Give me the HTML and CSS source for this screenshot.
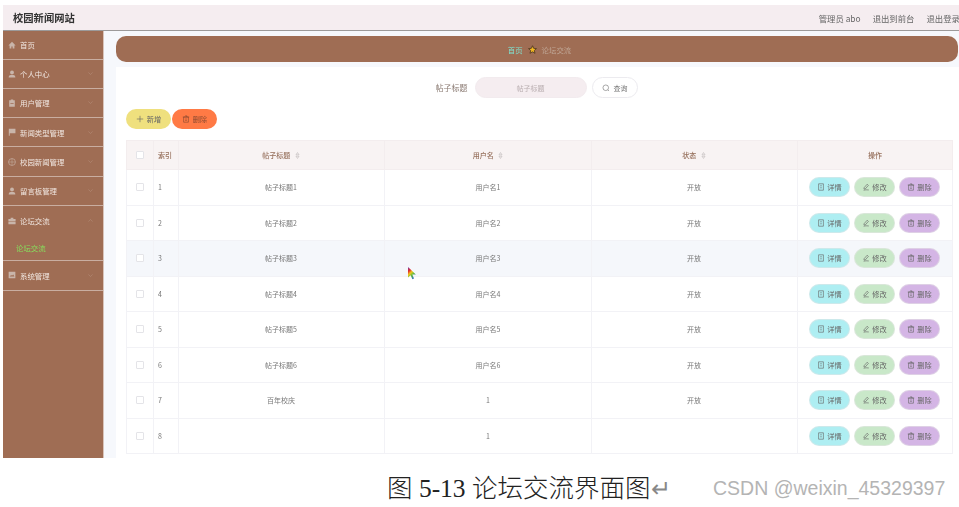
FILE: index.html
```html
<!DOCTYPE html>
<html lang="zh">
<head>
	<meta charset="UTF-8">
	<meta name="viewport" content="width=device-width, initial-scale=1.0">
	<title>校园新闻网站</title>
	<link rel="stylesheet" href="styles.css">
</head>
<body>
	<svg class="defs" width="0" height="0">
		<symbol id="i-doc" viewBox="0 0 10 10"><path d="M2 1h6v8H2zM4 3.500h2M4 6h2" fill="none" stroke="currentColor" stroke-width=".8"/></symbol>
		<symbol id="i-edit" viewBox="0 0 10 10"><path d="M6.500 1.500 8 3 4 7.500H2.500V6zM2 9c2-.6 4-.6 6.500-.3" fill="none" stroke="currentColor" stroke-width=".8"/></symbol>
		<symbol id="i-del" viewBox="0 0 10 10"><path d="M2 2.500h6V9H2zM1 2.500h8M4 1h2v1.500M4 5h2M4 6.800h2" fill="none" stroke="currentColor" stroke-width=".8"/></symbol>
		<symbol id="i-down" viewBox="0 0 10 10"><path d="M2 3.500 5 6.500 8 3.500" fill="none" stroke="currentColor" stroke-width=".8"/></symbol>
		<symbol id="i-up" viewBox="0 0 10 10"><path d="M2 6.500 5 3.500 8 6.500" fill="none" stroke="currentColor" stroke-width=".8"/></symbol>
		<symbol id="i-sort" viewBox="0 0 6 10"><path d="M3 .8 5.200 4H.8zM3 9.200.8 6h4.400z" fill="none" stroke="currentColor" stroke-width=".8"/></symbol>
		<linearGradient id="rainbow" x1="0" y1="0" x2=".6" y2="1">
			<stop offset="0" stop-color="#6a3fb5"/>
			<stop offset=".28" stop-color="#e0262c"/>
			<stop offset=".5" stop-color="#f2c81d"/>
			<stop offset=".72" stop-color="#5fb83a"/>
			<stop offset="1" stop-color="#2f6fc4"/>
		</linearGradient>
	</svg>

	<div class="shot">
		<header class="topbar">
			<div class="logo">校园新闻网站</div>
			<div class="topnav">
				<span>管理员 abo</span>
				<span>退出到前台</span>
				<span>退出登录</span>
			</div>
		</header>
		<div class="body-row">
			<nav class="side">
				<div class="menu-item">
					<svg class="m-ico" viewBox="0 0 10 10"><path d="M5 1 .5 5.500H2V9.500h2.200V7h1.600v2.500H8V5.500h1.500z"/></svg>
					<span>首页</span>
				</div>
				<div class="menu-item">
					<svg class="m-ico" viewBox="0 0 10 10"><circle cx="5" cy="3" r="2.400"/><path d="M.8 9.500c0-2.600 1.800-3.500 4.200-3.500s4.200.9 4.200 3.500z"/></svg>
					<span>个人中心</span>
					<svg class="arrow"><use href="#i-down"/></svg>
				</div>
				<div class="menu-item">
					<svg class="m-ico" viewBox="0 0 10 10"><path d="M1.500 1.500h2V.7h3v.8h2v8.300h-7zM3 5h4v1H3z" fill-rule="evenodd"/></svg>
					<span>用户管理</span>
					<svg class="arrow"><use href="#i-down"/></svg>
				</div>
				<div class="menu-item">
					<svg class="m-ico" viewBox="0 0 10 10"><path d="M1 .8h8.300v5.700H2.200v3.200H1z"/></svg>
					<span>新闻类型管理</span>
					<svg class="arrow"><use href="#i-down"/></svg>
				</div>
				<div class="menu-item">
					<svg class="m-ico" viewBox="0 0 10 10"><circle cx="5" cy="5" r="4.300" fill="none" stroke="currentColor" stroke-width=".8"/><path d="M5 .8v8.400M.8 5h8.400" fill="none" stroke="currentColor" stroke-width=".6"/></svg>
					<span>校园新闻管理</span>
					<svg class="arrow"><use href="#i-down"/></svg>
				</div>
				<div class="menu-item">
					<svg class="m-ico" viewBox="0 0 10 10"><circle cx="5" cy="3" r="2.400"/><path d="M.8 9.500c0-2.600 1.800-3.500 4.200-3.500s4.200.9 4.200 3.500z"/></svg>
					<span>留言板管理</span>
					<svg class="arrow"><use href="#i-down"/></svg>
				</div>
				<div class="menu-group">
					<div class="menu-head">
						<svg class="m-ico" viewBox="0 0 10 10"><path d="M3.300 2.500V1h3.400v1.500h2.800v3H.5v-3zM.5 6.200h9v3h-9z"/></svg>
						<span>论坛交流</span>
						<svg class="arrow"><use href="#i-up"/></svg>
					</div>
					<div class="sub-item">论坛交流</div>
				</div>
				<div class="menu-item">
					<svg class="m-ico" viewBox="0 0 10 10"><path d="M.8 1h8.400v8H.8zM2 7h6L6.500 4.500 5 6 4 5z" fill-rule="evenodd"/></svg>
					<span>系统管理</span>
					<svg class="arrow"><use href="#i-down"/></svg>
				</div>
			</nav>

			<main class="main">
				<div class="crumb">
					<span class="crumb-home">首页</span>
					<svg class="crumb-star" viewBox="0 0 10 10"><path d="M5 .8 6.300 3.700 9.400 4 7 6.100 7.800 9.200 5 7.600 2.200 9.200 3 6.100.6 4 3.700 3.700z" fill="#f2b721" stroke="#4a3524" stroke-width=".9"/></svg>
					<span class="crumb-cur">论坛交流</span>
				</div>
				<section class="card">
					<div class="search">
						<label class="search-label" for="title">帖子标题</label>
						<input class="search-input" id="title" type="text" placeholder="帖子标题">
						<button class="btn-query" type="button">
							<svg class="b-ico" viewBox="0 0 10 10"><circle cx="4.700" cy="4.700" r="3.500" fill="none" stroke="currentColor" stroke-width=".8"/><path d="M7.300 7.300 8.800 8.800" stroke="currentColor" stroke-width=".8"/></svg>查询
						</button>
					</div>
					<div class="tools">
						<button class="btn-tool add" type="button">
							<svg class="b-ico" viewBox="0 0 10 10"><path d="M5 1v8M1 5h8" stroke="currentColor" stroke-width=".8"/></svg>新增
						</button>
						<button class="btn-tool remove" type="button">
							<svg class="b-ico"><use href="#i-del"/></svg>删除
						</button>
					</div>
					<table class="list">
						<colgroup>
							<col class="c-check"><col class="c-index"><col class="c-title"><col class="c-user"><col class="c-state"><col class="c-op">
						</colgroup>
						<thead>
							<tr>
								<th><i class="check"></i></th>
								<th>索引</th>
								<th>帖子标题 <svg class="sort"><use href="#i-sort"/></svg></th>
								<th>用户名 <svg class="sort"><use href="#i-sort"/></svg></th>
								<th>状态 <svg class="sort"><use href="#i-sort"/></svg></th>
								<th>操作</th>
							</tr>
						</thead>
						<tbody>
							<tr>
								<td><i class="check"></i></td><td>1</td><td>帖子标题1</td><td>用户名1</td><td>开放</td>
								<td class="ops"><button class="op detail"><svg class="b-ico"><use href="#i-doc"/></svg>详情</button><button class="op edit"><svg class="b-ico"><use href="#i-edit"/></svg>修改</button><button class="op del"><svg class="b-ico"><use href="#i-del"/></svg>删除</button></td>
							</tr>
							<tr>
								<td><i class="check"></i></td><td>2</td><td>帖子标题2</td><td>用户名2</td><td>开放</td>
								<td class="ops"><button class="op detail"><svg class="b-ico"><use href="#i-doc"/></svg>详情</button><button class="op edit"><svg class="b-ico"><use href="#i-edit"/></svg>修改</button><button class="op del"><svg class="b-ico"><use href="#i-del"/></svg>删除</button></td>
							</tr>
							<tr class="hover">
								<td><i class="check"></i></td><td>3</td><td>帖子标题3</td><td>用户名3</td><td>开放</td>
								<td class="ops"><button class="op detail"><svg class="b-ico"><use href="#i-doc"/></svg>详情</button><button class="op edit"><svg class="b-ico"><use href="#i-edit"/></svg>修改</button><button class="op del"><svg class="b-ico"><use href="#i-del"/></svg>删除</button></td>
							</tr>
							<tr>
								<td><i class="check"></i></td><td>4</td><td>帖子标题4</td><td>用户名4</td><td>开放</td>
								<td class="ops"><button class="op detail"><svg class="b-ico"><use href="#i-doc"/></svg>详情</button><button class="op edit"><svg class="b-ico"><use href="#i-edit"/></svg>修改</button><button class="op del"><svg class="b-ico"><use href="#i-del"/></svg>删除</button></td>
							</tr>
							<tr>
								<td><i class="check"></i></td><td>5</td><td>帖子标题5</td><td>用户名5</td><td>开放</td>
								<td class="ops"><button class="op detail"><svg class="b-ico"><use href="#i-doc"/></svg>详情</button><button class="op edit"><svg class="b-ico"><use href="#i-edit"/></svg>修改</button><button class="op del"><svg class="b-ico"><use href="#i-del"/></svg>删除</button></td>
							</tr>
							<tr>
								<td><i class="check"></i></td><td>6</td><td>帖子标题6</td><td>用户名6</td><td>开放</td>
								<td class="ops"><button class="op detail"><svg class="b-ico"><use href="#i-doc"/></svg>详情</button><button class="op edit"><svg class="b-ico"><use href="#i-edit"/></svg>修改</button><button class="op del"><svg class="b-ico"><use href="#i-del"/></svg>删除</button></td>
							</tr>
							<tr>
								<td><i class="check"></i></td><td>7</td><td>百年校庆</td><td>1</td><td>开放</td>
								<td class="ops"><button class="op detail"><svg class="b-ico"><use href="#i-doc"/></svg>详情</button><button class="op edit"><svg class="b-ico"><use href="#i-edit"/></svg>修改</button><button class="op del"><svg class="b-ico"><use href="#i-del"/></svg>删除</button></td>
							</tr>
							<tr>
								<td><i class="check"></i></td><td>8</td><td></td><td>1</td><td></td>
								<td class="ops"><button class="op detail"><svg class="b-ico"><use href="#i-doc"/></svg>详情</button><button class="op edit"><svg class="b-ico"><use href="#i-edit"/></svg>修改</button><button class="op del"><svg class="b-ico"><use href="#i-del"/></svg>删除</button></td>
							</tr>
						</tbody>
					</table>
				</section>
			</main>
		</div>
		<svg class="cursor" viewBox="0 0 10 14"><path d="M1 1v10.500l2.600-2.300 1.800 4 1.600-.7-1.700-3.900h3.500z" fill="url(#rainbow)"/></svg>
	</div>

	<footer class="caption">
		<div class="caption-text">图 5-13 论坛交流界面图<span class="return">↵</span></div>
		<div class="mark">CSDN @weixin_45329397</div>
	</footer>
</body>
</html>
```

FILE: styles.css
```css
* {
	box-sizing: border-box;
}
html, body {
	margin: 0;
	height: 100%;
	overflow: hidden;
	background: #fff;
}
body {
	padding: 5px 0 0 3px;
	font-family: "Noto Sans CJK SC", "Liberation Sans", sans-serif;
}
.defs {
	position: absolute;
}

.shot {
	position: relative;
	height: 453px;
	display: flex;
	flex-direction: column;
	overflow: hidden;
	background: #f6f8fc;
	filter: blur(0.45px);
}

/* top */
.topbar {
	height: 26px;
	flex: none;
	display: flex;
	align-items: center;
	justify-content: space-between;
	padding-left: 10px;
	background: #f5edf0;
	border-bottom: 1px solid #9c9a9a;
}
.logo {
	font-size: 10.300px;
	font-weight: 700;
	color: #333;
}
.topnav {
	display: flex;
	gap: 12px;
	margin-right: -1px;
	font-size: 8.400px;
	color: #666;
	white-space: nowrap;
}

.body-row {
	flex: 1;
	display: flex;
	min-height: 0;
}

/* side */
.side {
	width: 101px;
	flex: none;
	background: #9f6d54;
	border-right: 1px solid #d9c4ba;
	color: #f0e6e0;
	font-size: 7.400px;
}
.menu-item, .menu-head {
	height: 29.300px;
	display: flex;
	align-items: center;
	padding-left: 5px;
	border-bottom: 1px solid #c9aea1;
}
.menu-item:first-child {
	height: 28.500px;
}
.menu-head {
	border-bottom: 0;
}
.menu-group {
	border-bottom: 1px solid #c9aea1;
}
.sub-item {
	height: 25px;
	display: flex;
	align-items: center;
	padding-left: 13px;
	color: #86e05d;
}
.m-ico {
	width: 8px;
	height: 8px;
	flex: none;
	margin-right: 4px;
	fill: #c9b5aa;
	color: #c9b5aa;
}
.arrow {
	width: 7px;
	height: 7px;
	margin-left: auto;
	margin-right: 9px;
	color: #b58f7c;
}

/* main */
.main {
	flex: 1;
	min-width: 0;
	padding: 5px 0 0 12px;
}
.crumb {
	height: 26px;
	margin-right: 1px;
	display: flex;
	align-items: center;
	justify-content: center;
	gap: 5px;
	padding-left: 5px;
	background: #9f6d54;
	border-radius: 10px;
	font-size: 7.400px;
}
.crumb-home {
	color: #7fe3d2;
}
.crumb-cur {
	color: #bfa594;
}
.crumb-star {
	width: 9px;
	height: 9px;
}
.card {
	height: 391px;
	margin-top: 5px;
	padding: 10px 6px 0 10px;
	background: #fff;
}

.search {
	height: 21px;
	display: flex;
	align-items: center;
	justify-content: center;
	gap: 7px;
	padding-right: 6px;
}
.search-label {
	font-size: 8px;
	color: #8a7a72;
}
.search-input {
	width: 112px;
	height: 21px;
	padding: 0;
	border: 1px solid #f2ebee;
	border-radius: 11px;
	background: #f5edf0;
	text-align: center;
	font: 7px "Noto Sans CJK SC", sans-serif;
	outline: none;
}
.search-input::placeholder {
	color: #b9aeb0;
}
.btn-query {
	width: 46px;
	height: 21px;
	margin-left: -2px;
	padding: 0;
	display: flex;
	align-items: center;
	justify-content: center;
	gap: 2px;
	background: #fff;
	border: 1px solid #ecebef;
	border-radius: 11px;
	color: #777;
	font: 7px "Noto Sans CJK SC", sans-serif;
}
.b-ico {
	width: 8px;
	height: 8px;
	flex: none;
	margin-right: 2px;
}

.tools {
	display: flex;
	gap: 1px;
	margin-top: 11px;
}
.btn-tool {
	width: 45px;
	height: 20px;
	padding: 0;
	display: flex;
	align-items: center;
	justify-content: center;
	gap: 1px;
	border: 1px solid transparent;
	border-radius: 10px;
	color: #666;
	font: 7.200px "Noto Sans CJK SC", sans-serif;
}
.add {
	background: #efe07e;
}
.remove {
	background: #ff7a45;
	color: #8b4a30;
}

/* table */
.list {
	width: 826px;
	margin-top: 11px;
	border-collapse: collapse;
	table-layout: fixed;
	font-size: 7px;
	color: #777;
	text-align: center;
}
.c-check { width: 27px; }
.c-index { width: 25px; }
.c-title { width: 206px; }
.c-user { width: 207px; }
.c-state { width: 206px; }
.c-op { width: 155px; }
.list th, .list td {
	border: 1px solid #f2f2f6;
	padding: 0;
}
.list th {
	height: 29px;
	background: #f8f3f3;
	border-color: #f3edee;
	color: #96705c;
	font-weight: 500;
}
.list td {
	height: 35.500px;
}
.list tr > :nth-child(2) {
	text-align: left;
	padding-left: 4px;
}
.list tr > :nth-child(3), .list tr > :nth-child(5) {
	padding-right: 1px;
}
.hover td {
	background: #f5f7fb;
}
.check {
	display: block;
	width: 8px;
	height: 8px;
	margin: 0 auto;
	background: #fff;
	border: 1px solid #e4e4e8;
	border-radius: 1px;
}
.sort {
	width: 5px;
	height: 7px;
	margin-left: 3px;
	vertical-align: -1px;
	color: #b9b3b3;
}
.list .ops {
	font-size: 0;
	padding-right: 1px;
}
.op {
	width: 41px;
	height: 20px;
	padding: 0;
	margin: 0 2px;
	display: inline-flex;
	align-items: center;
	justify-content: center;
	border: 1px solid rgba(230, 230, 230, .55);
	border-radius: 10px;
	color: #666;
	font: 7.200px "Noto Sans CJK SC", sans-serif;
}
.detail {
	background: #aeeef2;
}
.edit {
	background: #c9e8c9;
}
.del {
	background: #d4b5e5;
}

.cursor {
	position: absolute;
	left: 404px;
	top: 261px;
	width: 10px;
	height: 14px;
}

/* caption under the screenshot */
.caption {
	height: 49px;
	display: flex;
	align-items: center;
	padding: 5px 0 0 384px;
}
.caption-text {
	width: 326px;
	font-family: "Liberation Serif", "Noto Sans CJK SC", serif;
	font-size: 25.500px;
	font-weight: 300;
	color: #222;
	white-space: nowrap;
}
.return {
	color: #888;
	font-size: 24px;
}
.mark {
	margin-top: 6px;
	font-family: "Liberation Sans", sans-serif;
	font-size: 19.500px;
	color: #b4b4b4;
	white-space: nowrap;
}
```
